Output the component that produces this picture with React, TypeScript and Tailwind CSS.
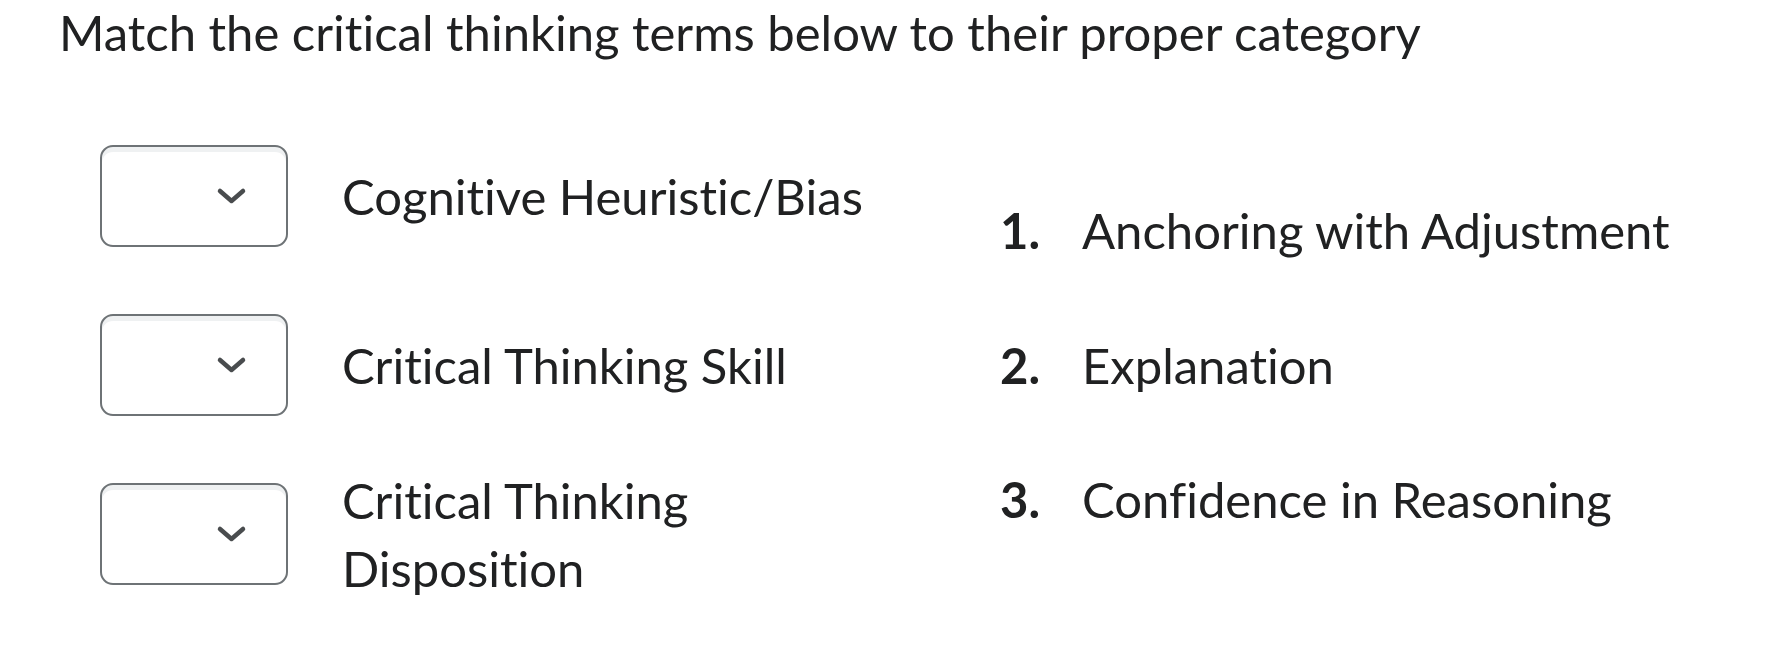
type Term = { id: string; label: string }

const terms: Term[] = [
  { id: 'bias', label: 'Cognitive Heuristic/Bias' },
  { id: 'skill', label: 'Critical Thinking Skill' },
  { id: 'disposition', label: 'Critical Thinking Disposition' },
]

const choices = ['Anchoring with Adjustment', 'Explanation', 'Confidence in Reasoning']

function Chevron() {
  return (
    <svg width="31" height="18" viewBox="0 0 31 18" fill="none" className="text-[#494c4e]">
      <path
        d="M4 4 L15.5 14 L27 4"
        stroke="currentColor"
        strokeWidth="4.5"
        strokeLinecap="round"
        strokeLinejoin="round"
      />
    </svg>
  )
}

function MatchSelect() {
  return (
    <div className="flex h-[102px] w-[188px] shrink-0 items-center justify-end rounded-[13px] border-2 border-[#6e7376] bg-white pr-[39px] shadow-[inset_0_5px_0_0_rgba(177,185,190,0.2)]">
      <Chevron />
    </div>
  )
}

export default function App() {
  return (
    <div className="h-[648px] w-full bg-white pl-[59px] pt-[3px] font-['Lato',sans-serif] text-[#202122] [font-variant-ligatures:none]">
      <h1 className="text-[49px] leading-[1.2]">
        Match the critical thinking terms below to their proper category
      </h1>

      <div className="mt-[83px] flex">
        <div className="ml-[41px] flex flex-col gap-[67px]">
          {terms.map(term => (
            <div key={term.id} className="flex h-[102px] items-center gap-[54px]">
              <MatchSelect />
              <span className="w-[540px] text-[49px] leading-[68px]">{term.label}</span>
            </div>
          ))}
        </div>

        <ol className="ml-[118px] flex flex-col gap-[76px] pt-[56px] text-[49px] leading-[1.2]">
          {choices.map((choice, i) => (
            <li key={choice} className="flex">
              <span className="w-[82px] font-bold">{i + 1}.</span>
              <span>{choice}</span>
            </li>
          ))}
        </ol>
      </div>
    </div>
  )
}
